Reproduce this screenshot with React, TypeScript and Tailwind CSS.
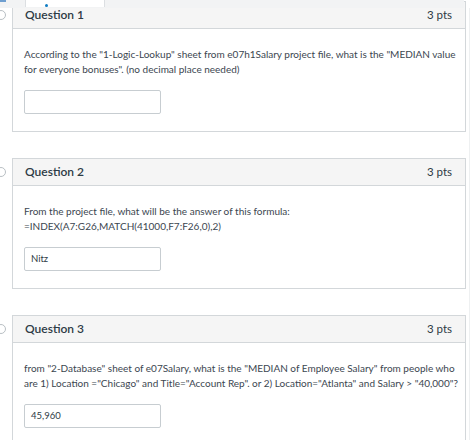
import React from "react";

const questions = [
  {
    title: "Question 1",
    pts: "3 pts",
    text: [
      'According to the "1-Logic-Lookup" sheet from e07h1Salary project file, what is the "MEDIAN value',
      'for everyone bonuses". (no decimal place needed)',
    ],
    answer: "",
  },
  {
    title: "Question 2",
    pts: "3 pts",
    text: [
      "From the project file, what will be the answer of this formula:",
      "=INDEX(A7:G26,MATCH(41000,F7:F26,0),2)",
    ],
    answer: "Nitz",
  },
  {
    title: "Question 3",
    pts: "3 pts",
    text: [
      'from "2-Database" sheet of e07Salary, what is the "MEDIAN of Employee Salary" from people who',
      'are 1) Location ="Chicago" and Title="Account Rep". or 2) Location="Atlanta" and Salary > "40,000"?',
    ],
    answer: "45,960",
  },
];

function QuestionCard({ q }: { q: (typeof questions)[number] }) {
  return (
    <div className="relative ml-[12px] w-[454px] border border-[#d3d7da] bg-white">
      <span className="absolute left-[-17px] top-[8px] h-[10px] w-[10px] rounded-full border border-[#b9bfc4] bg-white" />
      <div className="flex h-[27px] items-center justify-between border-b border-[#d3d7da] bg-[#f5f5f5] pl-[12px] pr-[13px]">
        <span className="text-[12px] font-semibold text-[#2d3b45]">{q.title}</span>
        <span className="text-[11.5px] text-[#2d3b45]">{q.pts}</span>
      </div>
      <div className="px-[11px] pb-[17px] pt-[18px]">
        <div className="whitespace-nowrap text-[10px] leading-[15px] text-[#3b4650]">
          {q.text.map((t) => (
            <div key={t}>{t}</div>
          ))}
        </div>
        <div className="mt-[13px] flex h-[24px] w-[137px] items-center rounded-[2px] border border-[#c7cdd1] bg-white px-[6px] text-[9.5px] text-[#2d3b45]">
          {q.answer}
        </div>
      </div>
    </div>
  );
}

export default function App() {
  return (
    <div
      className="relative h-[440px] w-[474px] overflow-hidden bg-white"
      style={{ fontFamily: "Lato, 'Open Sans', sans-serif" }}
    >
      <div className="flex flex-col gap-[26px] pt-px">
        {questions.map((q) => (
          <QuestionCard key={q.title} q={q} />
        ))}
      </div>
      <div className="absolute left-0 top-0 flex h-[8px] w-[464px] items-start bg-[#f2f3f4]">
        <div className="h-[2px] w-[6px] bg-[#6f9fd0]" />
        <div className="ml-[19px] flex h-[7px] w-[80px] items-end border-x border-[#dcdfe2] bg-white pl-[19px]">
          <div className="h-[3px] w-[3px] rounded-full bg-[#0e7cc3]" />
        </div>
      </div>
      <div className="absolute right-[4px] top-[8px] h-[432px] w-px bg-[#eef0f1]" />
    </div>
  );
}
